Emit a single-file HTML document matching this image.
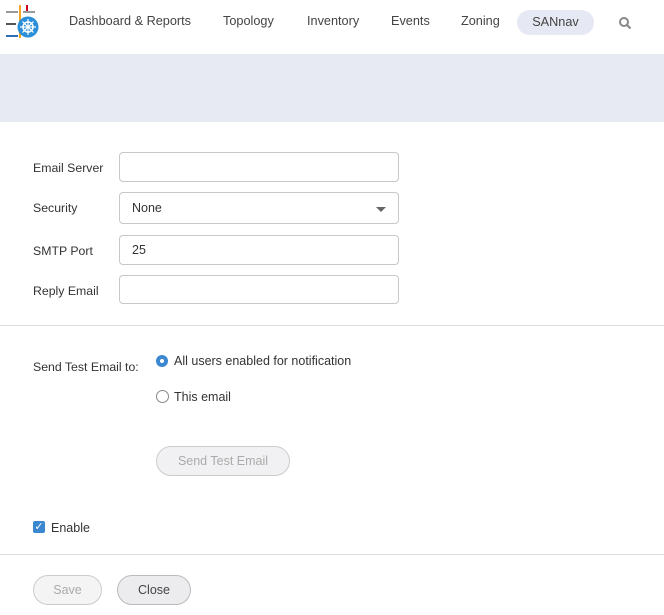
<!DOCTYPE html>
<html><head><style>
body{margin:0;width:664px;height:615px;position:relative;font-family:"Liberation Sans",sans-serif;color:#444;background:#fff;overflow:hidden}
.a{position:absolute}
.nav{font-size:12.7px;color:#444;top:14px}
.lbl{font-size:12.3px;left:33px;color:#333}
.inp{left:119px;width:280px;border:1px solid #c8c8c8;border-radius:4px;box-sizing:border-box;background:#fff;font-size:12.5px;padding-left:12px;color:#333}
.btn{border:1px solid #ccc;border-radius:15px;box-sizing:border-box;background:#f1f1f3;font-size:12.5px;text-align:center;line-height:28px;color:#aaa}
</style></head><body>
<svg class="a" style="left:0;top:0" width="44" height="42" viewBox="0 0 44 42">
<rect x="6" y="11" width="12" height="2" fill="#999"/><rect x="23" y="11" width="12" height="2" fill="#999"/>
<rect x="6" y="23" width="10" height="2" fill="#555"/>
<rect x="6" y="35" width="12" height="2" fill="#2d6eb5"/>
<rect x="19" y="5" width="2" height="33" fill="#f5a623"/>
<rect x="26" y="5" width="2" height="6" fill="#d0021b"/>
<circle cx="28" cy="27" r="10.5" fill="#2a8fd8"/>
<circle cx="28" cy="27" r="5" fill="none" stroke="#fff" stroke-width="1.5"/>
<g stroke="#fff" stroke-width="1.2"><line x1="28" y1="19" x2="28" y2="35"/><line x1="20" y1="27" x2="36" y2="27"/><line x1="22.5" y1="21.5" x2="33.5" y2="32.5"/><line x1="33.5" y1="21.5" x2="22.5" y2="32.5"/></g>
</svg>
<div class="a nav" style="left:69px">Dashboard &amp; Reports</div>
<div class="a nav" style="left:223px">Topology</div>
<div class="a nav" style="left:307px">Inventory</div>
<div class="a nav" style="left:391px">Events</div>
<div class="a nav" style="left:461px">Zoning</div>
<div class="a nav" style="left:517px;top:10px;width:77px;height:25px;border-radius:13px;background:#e6e8f4;text-align:center;line-height:24px;font-size:12.7px">SANnav</div>
<svg class="a" style="left:618px;top:16px" width="14" height="14" viewBox="0 0 14 14"><circle cx="6" cy="6" r="4" fill="none" stroke="#888" stroke-width="2"/><line x1="9" y1="9" x2="12.5" y2="12.5" stroke="#888" stroke-width="2.2"/></svg>
<div class="a" style="left:0;top:54px;width:664px;height:68px;background:#e7eaf2"></div>
<div class="a lbl" style="top:161px">Email Server</div>
<div class="a inp" style="top:152px;height:30px"></div>
<div class="a lbl" style="top:201px">Security</div>
<div class="a inp" style="top:192px;height:32px;line-height:30px">None<span class="a" style="right:12px;top:14px;border:5px solid transparent;border-top-color:#666;border-bottom:0"></span></div>
<div class="a lbl" style="top:244px">SMTP Port</div>
<div class="a inp" style="top:235px;height:30px;line-height:28px">25</div>
<div class="a lbl" style="top:284px">Reply Email</div>
<div class="a inp" style="top:275px;height:29px"></div>
<div class="a" style="left:0;top:325px;width:664px;height:1px;background:#ddd"></div>
<div class="a lbl" style="top:360px">Send Test Email to:</div>
<div class="a" style="left:156px;top:355px;width:12px;height:12px;border-radius:50%;background:#3c88d0"><div class="a" style="left:4px;top:4px;width:4px;height:4px;border-radius:50%;background:#fff"></div></div>
<div class="a" style="left:174px;top:354px;font-size:12.5px;color:#333">All users enabled for notification</div>
<div class="a" style="left:156px;top:390px;width:11px;height:11px;border-radius:50%;border:1px solid #888"></div>
<div class="a" style="left:174px;top:390px;font-size:12.5px;color:#333">This email</div>
<div class="a btn" style="left:156px;top:446px;width:134px;height:30px">Send Test Email</div>
<div class="a" style="left:33px;top:521px;width:12px;height:12px;border-radius:2px;background:#3c88d0;color:#fff;font-size:11px;line-height:12px;text-align:center">✓</div>
<div class="a" style="left:51px;top:521px;font-size:12.5px;color:#333">Enable</div>
<div class="a" style="left:0;top:554px;width:664px;height:1px;background:#ddd"></div>
<div class="a btn" style="left:33px;top:575px;width:69px;height:30px;background:#f4f4f5">Save</div>
<div class="a btn" style="left:117px;top:575px;width:74px;height:30px;background:#ececef;color:#444;border-color:#bbb">Close</div>
</body></html>
